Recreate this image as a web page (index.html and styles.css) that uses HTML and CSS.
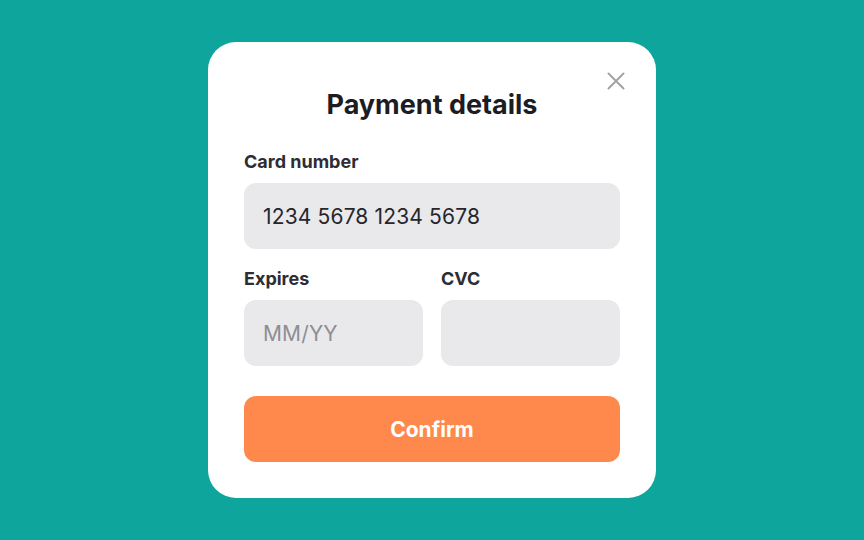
FILE: index.html
```html
<!DOCTYPE html>
<html lang="en">
<head>
    <meta charset="UTF-8">
    <title>Payment details</title>
    <link rel="stylesheet" href="styles.css">
</head>
<body>
    <div class="modal">
        <button class="close" aria-label="Close">
            <svg width="18" height="18" viewBox="0 0 18 18">
                <path d="M1.5 1.5L16.5 16.5M16.5 1.5L1.5 16.5" stroke="#a3a3a3" stroke-width="2" stroke-linecap="round"/>
            </svg>
        </button>
        <h1 class="title">Payment details</h1>
        <div class="field">
            <label class="label">Card number</label>
            <input class="input" type="text" value="1234 5678 1234 5678">
        </div>
        <div class="row">
            <div class="field">
                <label class="label">Expires</label>
                <input class="input" type="text" placeholder="MM/YY">
            </div>
            <div class="field">
                <label class="label">CVC</label>
                <input class="input" type="text">
            </div>
        </div>
        <button class="confirm">Confirm</button>
    </div>
</body>
</html>
```

FILE: styles.css
```css
html, body{
    margin: 0;
    height: 100%;
}

body{
    background-color: #0ea59d;
    font-family: Inter, "Noto Sans", sans-serif;
    display: flex;
    align-items: center;
    justify-content: center;
}

.modal{
    position: relative;
    box-sizing: border-box;
    width: 448px;
    height: 456px;
    background-color: #ffffff;
    border-radius: 28px;
    padding: 47px 36px 36px;
    display: flex;
    flex-direction: column;
}

.close{
    position: absolute;
    top: 30px;
    right: 31px;
    width: 18px;
    height: 18px;
    padding: 0;
    border: none;
    background: none;
    display: flex;
}

.title{
    margin: 0 0 30px;
    font-size: 27px;
    line-height: 32px;
    font-weight: 700;
    color: #1c1c22;
    text-align: center;
}

.field{
    display: flex;
    flex-direction: column;
    flex: 1;
}

.label{
    font-size: 18px;
    line-height: 22px;
    font-weight: 700;
    color: #2d2d33;
    margin-bottom: 10px;
}

.input{
    box-sizing: border-box;
    height: 66px;
    width: 100%;
    border: none;
    border-radius: 12px;
    background-color: #e9e9eb;
    padding: 0 19px;
    font-family: inherit;
    font-size: 21px;
    letter-spacing: 0.15px;
    color: #26262c;
    outline: none;
}

.input::placeholder{
    color: #8e8e93;
}

.row{
    display: flex;
    gap: 18px;
    margin-top: 19px;
}

.confirm{
    margin-top: 30px;
    height: 66px;
    border: none;
    border-radius: 12px;
    background-color: #ff884d;
    color: #ffffff;
    font-family: inherit;
    font-size: 21px;
    font-weight: 700;
}
```
